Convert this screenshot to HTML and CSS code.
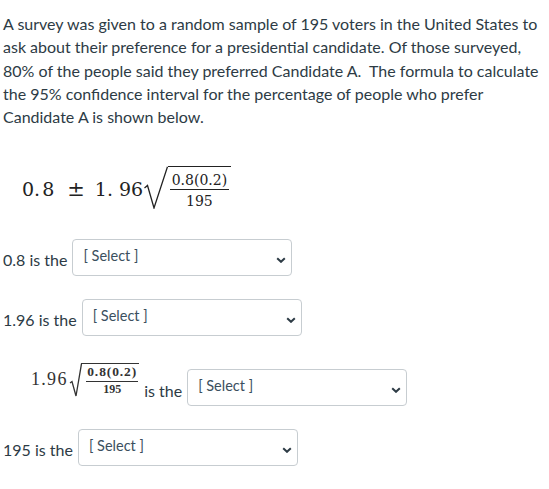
FILE: index.html
```html
<!DOCTYPE html>
<html lang="en">
<head>
<meta charset="utf-8">
<title>Survey question</title>
<link rel="stylesheet" href="styles.css">
</head>
<body>
<div class="page">
  <p class="intro">A survey was given to a random sample of 195 voters in the United States to ask about their preference for a presidential candidate. Of those surveyed, 80% of the people said they preferred Candidate A.&nbsp; The formula to calculate the 95% confidence interval for the percentage of people who prefer Candidate A is shown below.</p>

  <div class="eq">
    <span class="eq-t">0.</span><span class="eq-t g2">8</span><span class="eq-t eq-pm">±</span><span class="eq-t g11">1.</span><span class="eq-t g6">96</span>
    <span class="sqrt">
      <svg class="rad" viewBox="0 0 25 43" width="25" height="43" aria-hidden="true"><path d="M1.5 22 L4.5 19.5 L11 42 L24.5 0.8" fill="none" stroke="#222" stroke-width="1.3" stroke-linejoin="miter"/></svg>
      <span class="radicand">
        <span class="frac-n">0.8(0.2)</span>
        <span class="frac-d">195</span>
      </span>
    </span>
  </div>

  <div class="row r1">
    <span class="label">0.8 is the</span>
    <div class="select"><span class="sel-text">[ Select ]</span><svg class="chev" viewBox="0 0 10 6" width="10" height="6" aria-hidden="true"><path d="M1.2 1.2 L5 4.8 L8.8 1.2" fill="none" stroke="#2d3b45" stroke-width="2"/></svg></div>
  </div>

  <div class="row r2">
    <span class="label">1.96 is the</span>
    <div class="select"><span class="sel-text">[ Select ]</span><svg class="chev" viewBox="0 0 10 6" width="10" height="6" aria-hidden="true"><path d="M1.2 1.2 L5 4.8 L8.8 1.2" fill="none" stroke="#2d3b45" stroke-width="2"/></svg></div>
  </div>

  <div class="row r3">
    <span class="eq2">
      <span class="eq2-t">1.96</span>
      <span class="sqrt2">
        <svg class="rad2" viewBox="0 0 13 34" width="13" height="34" aria-hidden="true"><path d="M1 20 L3 18.5 L7 33 L12.5 0.7" fill="none" stroke="#333" stroke-width="1.3"/></svg>
        <span class="radicand2">
          <span class="frac2-n">0.8(0.2)</span>
          <span class="frac2-d">195</span>
        </span>
      </span>
    </span>
    <span class="label l3">is the</span>
    <div class="select s3"><span class="sel-text">[ Select ]</span><svg class="chev" viewBox="0 0 10 6" width="10" height="6" aria-hidden="true"><path d="M1.2 1.2 L5 4.8 L8.8 1.2" fill="none" stroke="#2d3b45" stroke-width="2"/></svg></div>
  </div>

  <div class="row r4">
    <span class="label">195 is the</span>
    <div class="select"><span class="sel-text">[ Select ]</span><svg class="chev" viewBox="0 0 10 6" width="10" height="6" aria-hidden="true"><path d="M1.2 1.2 L5 4.8 L8.8 1.2" fill="none" stroke="#2d3b45" stroke-width="2"/></svg></div>
  </div>
</div>
</body>
</html>
```

FILE: styles.css
```css
html, body {
  margin: 0;
  padding: 0;
  background: #ffffff;
}

.page {
  padding: 0 0 0 3px;
  font-family: Lato, "Liberation Sans", sans-serif;
  font-size: 16px;
  line-height: 23.35px;
  color: #2d3b45;
}

.intro {
  margin: 12px 0 0 0;
  width: 545px;
}

/* main formula */
.eq {
  display: flex;
  align-items: flex-start;
  margin: 37px 0 0 19px;
  height: 43px;
  font-family: "DejaVu Serif", "Liberation Serif", serif;
  color: #222;
}

.eq-t {
  font-size: 19px;
  line-height: 22px;
  padding-top: 12px;
  white-space: pre;
}

.eq-pm {
  font-size: 21px;
  margin-left: 13px;
}

.g2 { margin-left: 2px; }
.g11 { margin-left: 10px; }
.g6 { margin-left: 6px; }

.sqrt {
  display: flex;
  align-items: flex-start;
}

.rad {
  display: block;
  flex: none;
}

.radicand {
  display: flex;
  flex-direction: column;
  align-items: center;
  border-top: 1.3px solid #222;
  margin-left: -0.5px;
  padding: 0 2px;
  font-size: 14px;
  line-height: 16px;
}

.frac-n {
  padding: 5px 2px 1px;
  border-bottom: 1px solid #222;
}

.frac-d {
  padding-top: 3px;
}

/* rows with selects */
.row {
  display: flex;
  align-items: flex-start;
  gap: 5px;
}

.r1 { margin-top: 30px; }
.r2 { margin-top: 23px; }
.r3 { margin-top: 27px; }
.r4 { margin-top: 23px; }

.label {
  margin-top: 9px;
  white-space: nowrap;
}

.select {
  box-sizing: border-box;
  width: 220px;
  height: 37px;
  border: 1px solid #c7cdd1;
  border-radius: 4px;
  background: #fff;
  display: flex;
  align-items: flex-start;
  justify-content: space-between;
  padding: 6px 5px 0 10px;
}

.sel-text {
  font-size: 14.5px;
  line-height: 20px;
  color: #3b4f5e;
}

.chev {
  display: block;
  margin-top: 11.5px;
}

/* small formula in row 3 */
.eq2 {
  display: flex;
  align-items: flex-start;
  margin-left: 28px;
  font-family: "Liberation Serif", "DejaVu Serif", serif;
  color: #333;
}

.eq2-t {
  font-size: 18px;
  line-height: 20px;
  padding-top: 6px;
  letter-spacing: 1.3px;
}

.sqrt2 {
  display: flex;
  align-items: flex-start;
  margin-left: 1px;
}

.rad2 {
  display: block;
  flex: none;
}

.radicand2 {
  display: flex;
  flex-direction: column;
  align-items: center;
  border-top: 1.3px solid #333;
  margin-left: -0.5px;
  padding: 0 1px 0 5px;
  font-weight: bold;
}

.frac2-n {
  font-size: 13.5px;
  line-height: 15px;
  padding: 0 1px 2px;
  border-bottom: 1px solid #333;
  letter-spacing: 0.9px;
}

.frac2-d {
  font-size: 12px;
  line-height: 12px;
  padding-top: 1px;
}

.l3 {
  margin-top: 16px;
}

.s3 {
  margin-top: 6px;
}
```
